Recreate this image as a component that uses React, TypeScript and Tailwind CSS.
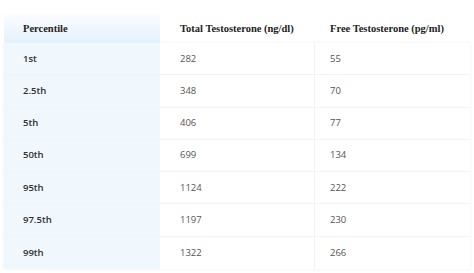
const rows = [
  ['1st', '282', '55'],
  ['2.5th', '348', '70'],
  ['5th', '406', '77'],
  ['50th', '699', '134'],
  ['95th', '1124', '222'],
  ['97.5th', '1197', '230'],
  ['99th', '1322', '266'],
]

export default function App() {
  return (
    <div className="h-[273px] w-[474px] bg-white px-[4px] pt-[14px]">
      <div className="grid h-[29px] grid-cols-[156px_154px_153px] font-['Liberation_Serif',serif] text-[10.5px] font-bold text-[#222]">
        <div className="flex items-center bg-gradient-to-b from-[#fbfdff] to-[#e4f1fc] pl-[19px]">
          Percentile
        </div>
        <div className="flex items-center pl-[20px]">Total Testosterone (ng/dl)</div>
        <div className="flex items-center pl-[16px]">Free Testosterone (pg/ml)</div>
      </div>
      <div className="shadow-[0_0_3px_rgba(0,0,0,0.07)] font-['Open_Sans',sans-serif] text-[9.5px]">
        {rows.map((r) => (
          <div
            key={r[0]}
            className="grid h-[32.3px] grid-cols-[156px_154px_153px] border-b border-[#f1f3f5] last:border-b-0"
          >
            <div className="flex items-center bg-[#f0f8fe] pl-[19px] font-semibold text-[#2f2f2f]">
              {r[0]}
            </div>
            <div className="flex items-center pl-[20px] text-[#555]">{r[1]}</div>
            <div className="flex items-center border-l border-[#f1f3f5] pl-[15px] text-[#555]">
              {r[2]}
            </div>
          </div>
        ))}
      </div>
    </div>
  )
}
